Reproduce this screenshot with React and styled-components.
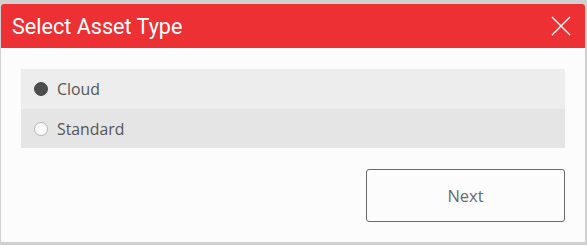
import React, { useState } from "react";
import styled, { createGlobalStyle } from "styled-components";

const Global = createGlobalStyle`
  html, body { margin: 0; padding: 0; background: #d0d0d0; }
  body { width: 587px; height: 245px; overflow: hidden; font-family: "Open Sans", sans-serif; }
`;

const Page = styled.div`
  padding: 4px 2px 0 1px;
`;

const Modal = styled.div`
  width: 584px;
  height: 238px;
  background: #fcfcfc;
  border-radius: 3px 3px 0 0;
  display: flex;
  flex-direction: column;
  overflow: hidden;
`;

const Header = styled.div`
  height: 44px;
  background: #ec3033;
  display: flex;
  align-items: center;
  justify-content: space-between;
  padding: 0 13px 0 11px;
  box-sizing: border-box;
  flex-shrink: 0;
`;

const Title = styled.h1`
  margin: 0;
  font-family: Roboto, "Noto Sans", sans-serif;
  font-weight: 400;
  font-size: 21.6px;
  color: #ffffff;
`;

const CloseButton = styled.button`
  background: none;
  border: 0;
  padding: 0;
  width: 22px;
  height: 22px;
  display: flex;
  align-items: center;
  justify-content: center;
  cursor: pointer;
`;

const Body = styled.div`
  padding: 21px 20px 0 20px;
  display: flex;
  flex-direction: column;
`;

const List = styled.div`
  display: flex;
  flex-direction: column;
`;

const Row = styled.label`
  height: ${(p) => p.$h}px;
  background: ${(p) => p.$bg};
  display: flex;
  align-items: center;
  padding-left: 13px;
  gap: 9px;
  cursor: pointer;
`;

const Radio = styled.span`
  width: 14px;
  height: 14px;
  border-radius: 50%;
  box-sizing: border-box;
  background: ${(p) => (p.$checked ? "#4d4d4d" : "#fafafa")};
  border: 1px solid ${(p) => (p.$checked ? "#4d4d4d" : "#b8b8b8")};
  flex-shrink: 0;
`;

const RowText = styled.span`
  font-family: "Open Sans", sans-serif;
  font-size: 15.8px;
  color: #555555;
`;

const Footer = styled.div`
  display: flex;
  justify-content: flex-end;
  padding-top: 21px;
`;

const NextButton = styled.button`
  width: 199px;
  height: 53px;
  box-sizing: border-box;
  border: 1px solid #6a6a6a;
  border-radius: 3px;
  background: #fcfcfc;
  font-family: "Open Sans", sans-serif;
  font-size: 16.5px;
  color: #666a70;
  cursor: pointer;
`;

const options = [
  { id: "cloud", label: "Cloud", bg: "#ededed", h: 40 },
  { id: "standard", label: "Standard", bg: "#e5e5e5", h: 39 },
];

export default function App() {
  const [selected, setSelected] = useState("cloud");
  return (
    <>
      <Global />
      <Page>
        <Modal>
          <Header>
            <Title>Select Asset Type</Title>
            <CloseButton aria-label="Close">
              <svg width="20" height="20" viewBox="0 0 20 20">
                <path d="M1 1 L19 19 M19 1 L1 19" stroke="#ffffff" strokeWidth="1.4" fill="none" />
              </svg>
            </CloseButton>
          </Header>
          <Body>
            <List>
              {options.map((o) => (
                <Row key={o.id} $bg={o.bg} $h={o.h} onClick={() => setSelected(o.id)}>
                  <Radio $checked={selected === o.id} />
                  <RowText>{o.label}</RowText>
                </Row>
              ))}
            </List>
            <Footer>
              <NextButton>Next</NextButton>
            </Footer>
          </Body>
        </Modal>
      </Page>
    </>
  );
}
